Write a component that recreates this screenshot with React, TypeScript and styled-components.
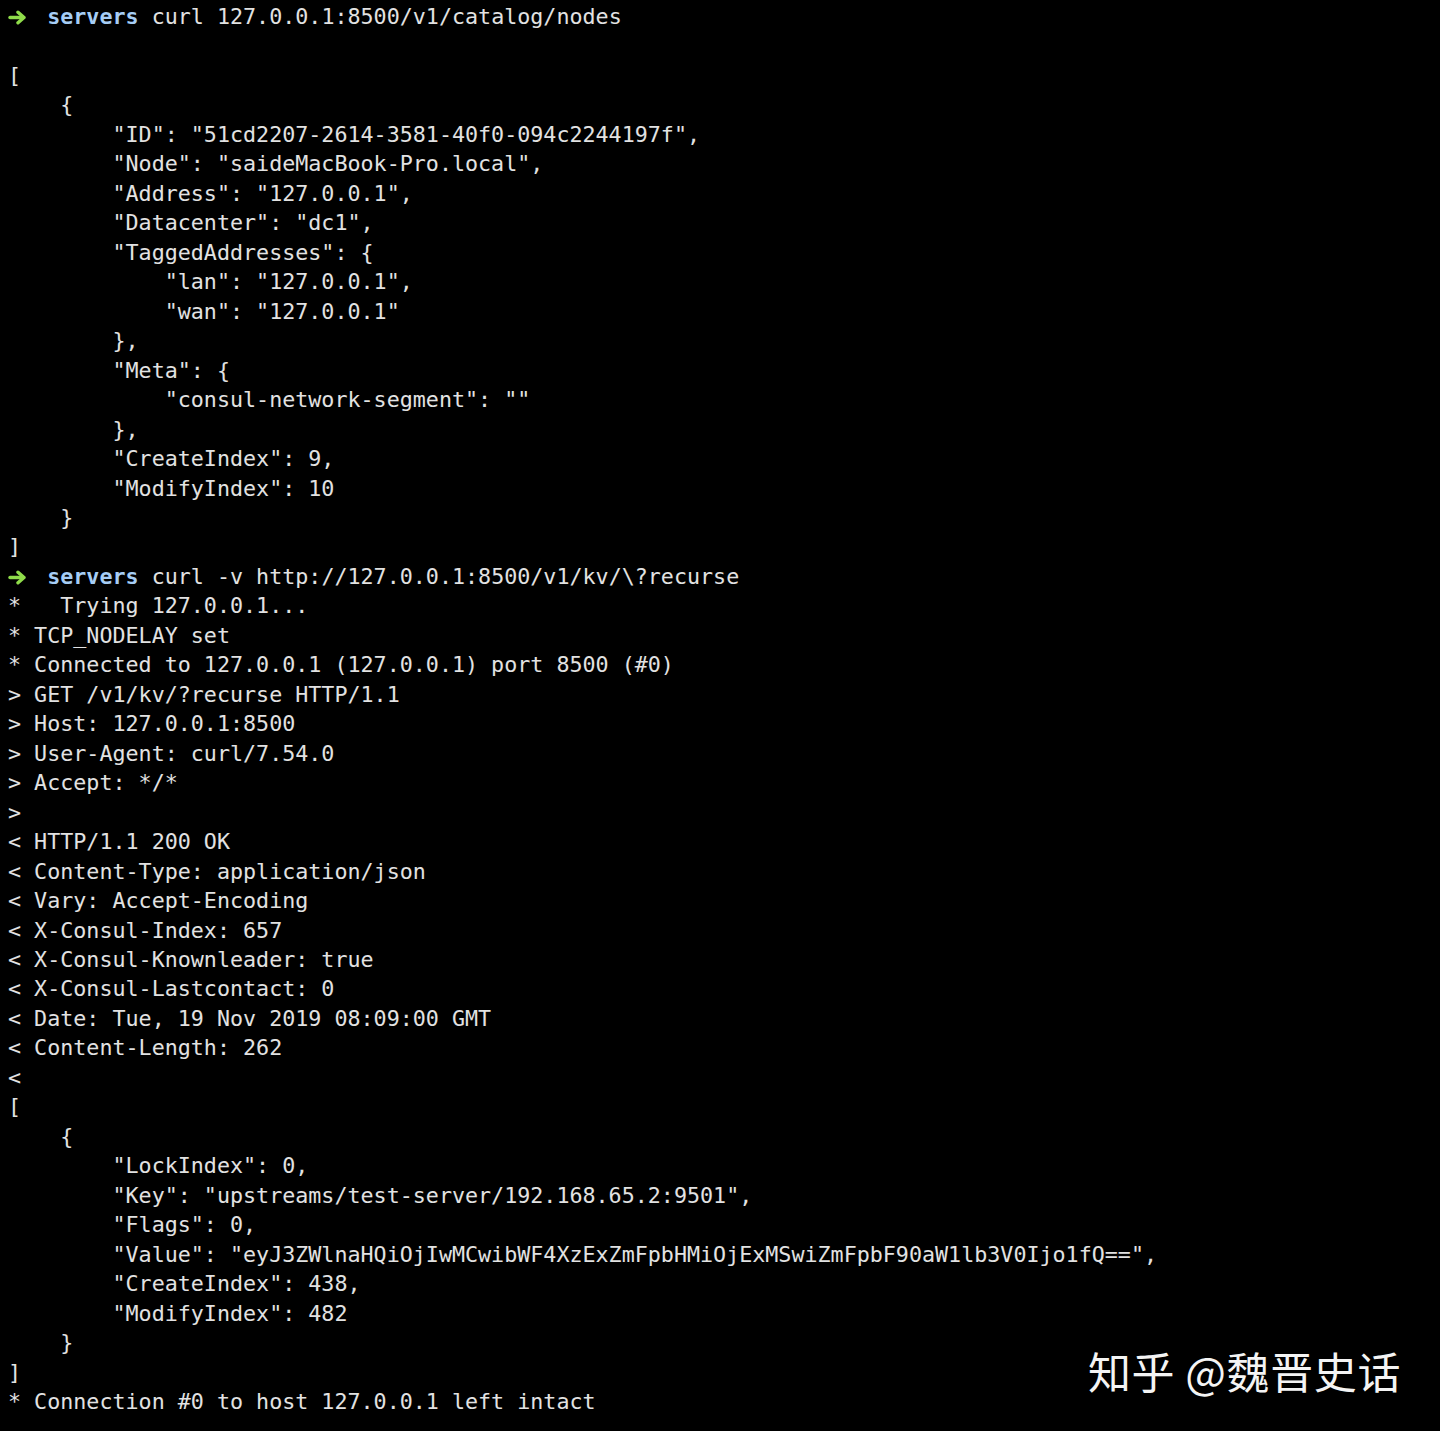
import React from "react";
import styled, { createGlobalStyle } from "styled-components";

const Global = createGlobalStyle`
  html, body { margin: 0; padding: 0; background: #000; }
  #root { background: #000; }
`;

const Screen = styled.div`
  position: relative;
  width: 1440px;
  min-height: 1431px;
  background: #000;
  overflow: hidden;
`;

const Terminal = styled.div`
  display: flex;
  flex-direction: column;
  padding: 2px 0 0 8px;
  font-family: "DejaVu Sans Mono", "Liberation Mono", monospace;
  font-size: 21.7px;
  line-height: 29.47px;
  color: #e2e2e2;
`;

const Line = styled.div`
  white-space: pre;
  height: 29.47px;
`;

const Arrow = styled.span`
  display: inline-flex;
  align-items: center;
  width: 26.14px;
  height: 29.47px;
  vertical-align: top;
  color: #8fdc4a;
  svg {
    display: block;
    margin-top: 1px;
  }
`;

const Dir = styled.span`
  color: #a6cdf5;
  font-weight: bold;
`;

const Watermark = styled.div`
  position: absolute;
  right: 39px;
  bottom: 39px;
  font-family: "Noto Sans CJK SC", "Noto Sans", sans-serif;
  font-size: 43px;
  line-height: 1;
  color: #f4f4f4;
  letter-spacing: 0.6px;
`;

const lines: string[] = [
  "@@curl 127.0.0.1:8500/v1/catalog/nodes",
  "",
  "[",
  "    {",
  '        "ID": "51cd2207-2614-3581-40f0-094c2244197f",',
  '        "Node": "saideMacBook-Pro.local",',
  '        "Address": "127.0.0.1",',
  '        "Datacenter": "dc1",',
  '        "TaggedAddresses": {',
  '            "lan": "127.0.0.1",',
  '            "wan": "127.0.0.1"',
  "        },",
  '        "Meta": {',
  '            "consul-network-segment": ""',
  "        },",
  '        "CreateIndex": 9,',
  '        "ModifyIndex": 10',
  "    }",
  "]",
  "@@curl -v http://127.0.0.1:8500/v1/kv/\\?recurse",
  "*   Trying 127.0.0.1...",
  "* TCP_NODELAY set",
  "* Connected to 127.0.0.1 (127.0.0.1) port 8500 (#0)",
  "> GET /v1/kv/?recurse HTTP/1.1",
  "> Host: 127.0.0.1:8500",
  "> User-Agent: curl/7.54.0",
  "> Accept: */*",
  ">",
  "< HTTP/1.1 200 OK",
  "< Content-Type: application/json",
  "< Vary: Accept-Encoding",
  "< X-Consul-Index: 657",
  "< X-Consul-Knownleader: true",
  "< X-Consul-Lastcontact: 0",
  "< Date: Tue, 19 Nov 2019 08:09:00 GMT",
  "< Content-Length: 262",
  "<",
  "[",
  "    {",
  '        "LockIndex": 0,',
  '        "Key": "upstreams/test-server/192.168.65.2:9501",',
  '        "Flags": 0,',
  '        "Value": "eyJ3ZWlnaHQiOjIwMCwibWF4XzExZmFpbHMiOjExMSwiZmFpbF90aW1lb3V0Ijo1fQ==",',
  '        "CreateIndex": 438,',
  '        "ModifyIndex": 482',
  "    }",
  "]",
  "* Connection #0 to host 127.0.0.1 left intact",
];

const PromptArrow = () => (
  <Arrow>
    <svg width="19" height="15" viewBox="0 0 19 15" fill="none">
      <path d="M2 7.5H15" stroke="currentColor" strokeWidth="3.4" strokeLinecap="round" />
      <path
        d="M10 2.2L16 7.5L10 12.8"
        stroke="currentColor"
        strokeWidth="3.4"
        strokeLinecap="round"
        strokeLinejoin="round"
      />
    </svg>
  </Arrow>
);

export default function App() {
  return (
    <Screen>
      <Global />
      <Terminal>
        {lines.map((l, i) =>
          l.startsWith("@@") ? (
            <Line key={i}>
              <PromptArrow />
              {" "}
              <Dir>servers</Dir>
              {" " + l.slice(2)}
            </Line>
          ) : (
            <Line key={i}>{l}</Line>
          )
        )}
      </Terminal>
      <Watermark>知乎 @魏晋史话</Watermark>
    </Screen>
  );
}
